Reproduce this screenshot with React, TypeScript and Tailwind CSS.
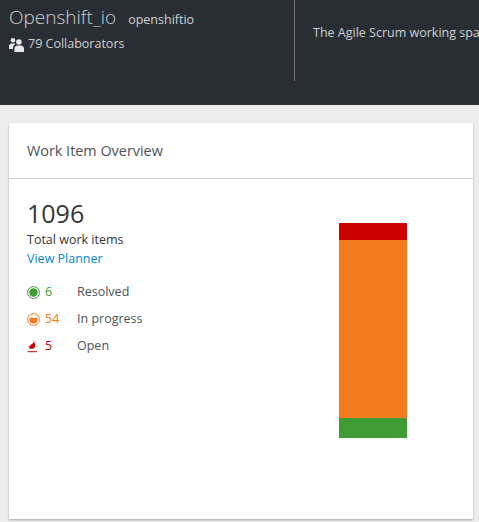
const stats = [
  { count: 6, label: "Resolved", color: "text-[#3f9c35]", icon: "resolved" },
  { count: 54, label: "In progress", color: "text-[#f47b20]", icon: "progress" },
  { count: 5, label: "Open", color: "text-[#cc0000]", icon: "open" },
];

function UsersIcon() {
  return (
    <svg width="16" height="16" viewBox="0 0 16 16" fill="#e8e8e8" className="shrink-0">
      <circle cx="4" cy="4.200" r="2.300" />
      <path d="M0 13v-2.500C0 8.800 1.300 7.500 2.800 7.500h2.600c.6 0 1 .2 1.300.5-1.500.6-2.400 1.900-2.600 3.300L3.900 13z" />
      <circle cx="9.900" cy="6" r="2.800" />
      <path d="M5.400 16v-3.300c0-1.900 1.300-3.200 2.900-3.200h3.500c1.800 0 3.200 1.400 3.200 3.200V16z" />
    </svg>
  );
}

function StatusIcon({ name }: { name: string }) {
  if (name === "resolved") {
    return (
      <svg width="13" height="13" viewBox="0 0 13 13">
        <circle cx="6.500" cy="6.500" r="5.900" fill="none" stroke="#3f9c35" strokeWidth="1" />
        <circle cx="6.500" cy="6.500" r="4.200" fill="#3f9c35" />
      </svg>
    );
  }
  if (name === "progress") {
    return (
      <svg width="13" height="13" viewBox="0 0 13 13">
        <circle cx="6.500" cy="6.500" r="5.900" fill="none" stroke="#f47b20" strokeWidth="1" />
        <path d="M2.400 4.800h8.200v1.700a4.100 4.100 0 0 1-8.200 0z" fill="#f47b20" />
      </svg>
    );
  }
  return (
    <svg width="13" height="13" viewBox="0 0 13 13">
      <path d="M6.900 0.400c.3 1.100 0 1.900-.8 2.700C4.800 4.300 2.300 5.600 2 7.300c0 .6.300 1.100.8 1.400h3.400C7.600 8 8.600 6.300 8.400 4.600c0-.5-.2-.9-.4-1.300-.1.300-.2.500-.4.600.2-1.300 0-2.500-.7-3.500z" fill="#cc0000" />
      <rect x="0.500" y="11.200" width="9.500" height="1" fill="#cc0000" />
    </svg>
  );
}

export default function App() {
  return (
    <div className="h-[522px] w-[479px] overflow-hidden bg-[#ededed] font-['Open_Sans',sans-serif]">
      <div className="flex h-[105px] bg-[#292e34] text-[#d1d1d1]">
        <div className="h-[81px] w-[295px] shrink-0 border-r border-[#72767b] pl-[9px]">
          <div className="flex items-baseline pt-[4px]">
            <span className="text-[19px] font-light leading-[26px]">Openshift_io</span>
            <span className="ml-[12px] text-[12.500px]">openshiftio</span>
          </div>
          <div className="mt-[4px] flex items-center gap-[3px] text-[12.500px] leading-[20px]">
            <UsersIcon />
            <span>79 Collaborators</span>
          </div>
        </div>
        <p className="pl-[18px] pt-[24px] text-[12.500px] leading-[18px] whitespace-nowrap">
          The Agile Scrum working space of the OpenShift.io team
        </p>
      </div>

      <div className="ml-[9px] mt-[18px] h-[396px] w-[464px] bg-white shadow-[0_1px_2px_rgba(0,0,0,0.3)]">
        <div className="flex h-[56px] items-center border-b border-[#d1d1d1] pl-[18px] text-[14.400px] text-[#4d5258]">
          Work Item Overview
        </div>
        <div className="flex justify-between pl-[18px] pr-[66px] pt-[44px]">
          <div className="-mt-[26px] text-[12.500px] text-[#4d5258]">
            <div className="text-[25px] leading-[33px] text-[#363636]">1096</div>
            <div className="leading-[20px] text-[#363636]">Total work items</div>
            <div className="-mt-[1px] leading-[20px] text-[#0088ce]">View Planner</div>
            <div className="mt-[15px] flex flex-col gap-[10px]">
              {stats.map((s) => (
                <div key={s.label} className="flex h-[17px] items-center">
                  <StatusIcon name={s.icon} />
                  <span className={`ml-[5px] w-[32px] ${s.color}`}>{s.count}</span>
                  <span>{s.label}</span>
                </div>
              ))}
            </div>
          </div>
          <div className="flex h-[215px] w-[68px] flex-col">
            <div className="h-[17px] bg-[#cc0000]" />
            <div className="h-[178px] bg-[#f47b20]" />
            <div className="h-[20px] bg-[#3f9c35]" />
          </div>
        </div>
      </div>
    </div>
  );
}
